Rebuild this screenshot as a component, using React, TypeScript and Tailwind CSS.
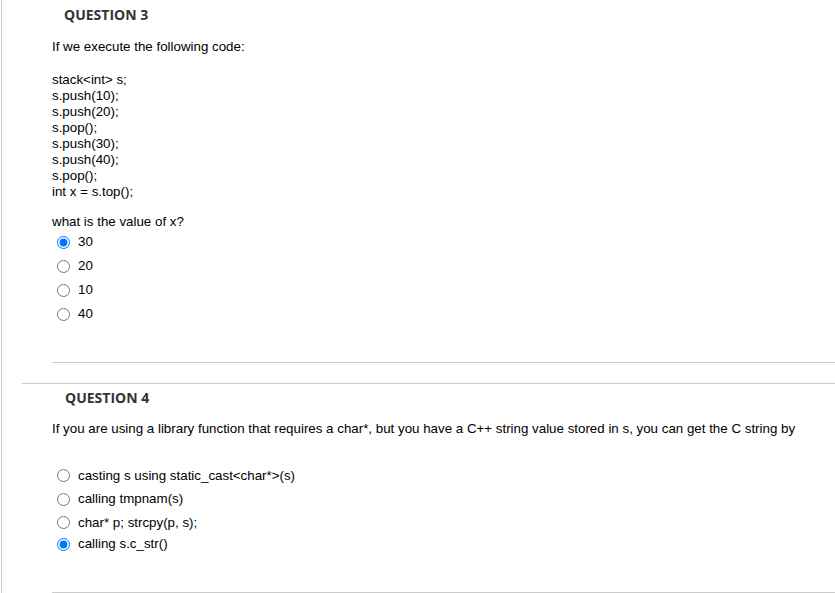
import React from "react";

function Radio({ checked, name, label, className }: { checked?: boolean; name: string; label: string; className: string }) {
  return (
    <label className={`flex items-center ${className}`}>
      <input type="radio" name={name} defaultChecked={checked} className="m-0 ml-[5px] w-[13px] h-[13px]" />
      <span className="ml-[8px]">{label}</span>
    </label>
  );
}

export default function App() {
  const code = [
    "stack<int> s;",
    "s.push(10);",
    "s.push(20);",
    "s.pop();",
    "s.push(30);",
    "s.push(40);",
    "s.pop();",
    "int x = s.top();",
  ];
  return (
    <div className="w-[835px] h-[593px] bg-white overflow-hidden">
      <div className="ml-[1px] h-full border-l border-[#cccccc] text-[13.33px] leading-[16px] text-black" style={{ fontFamily: '"Liberation Sans", Arial, sans-serif' }}>
        <div className="pl-[50px]">
          <div className="pt-[5px] ml-[12px] h-[25px] text-[14px] leading-[20px] font-bold text-[#333333]" style={{ fontFamily: '"Open Sans", sans-serif' }}>
            QUESTION 3
          </div>
          <div className="mt-[14px]">If we execute the following code:</div>
          <div className="mt-[17px]">
            {code.map((c) => (
              <div key={c}>{c}</div>
            ))}
          </div>
          <div className="mt-[14px]">what is the value of x?</div>
          <div>
            <Radio name="q3" checked label="30" className="h-[24px]" />
            <Radio name="q3" label="20" className="h-[24px]" />
            <Radio name="q3" label="10" className="h-[24px]" />
            <Radio name="q3" label="40" className="h-[24px]" />
          </div>
          <div className="mt-[36px] h-px bg-[#cccccc]" />
        </div>
        <div className="mt-[20px] ml-[20px] h-px bg-[#cccccc]" />
        <div className="pl-[50px]">
          <div className="mt-[4px] ml-[13px] h-[20px] text-[14px] leading-[20px] font-bold text-[#333333]" style={{ fontFamily: '"Open Sans", sans-serif' }}>
            QUESTION 4
          </div>
          <div className="mt-[13px]">
            If you are using a library function that requires a char*, but you have a C++ string value stored in s, you can get the C string by
          </div>
          <div className="mt-[27px]">
            <Radio name="q4" label="casting s using static_cast<char*>(s)" className="h-[23px]" />
            <Radio name="q4" label="calling tmpnam(s)" className="h-[24px]" />
            <Radio name="q4" label="char* p; strcpy(p, s);" className="h-[23px]" />
            <Radio name="q4" checked label="calling s.c_str()" className="h-[20px]" />
          </div>
          <div className="mt-[38px] h-px bg-[#cccccc]" />
        </div>
      </div>
    </div>
  );
}
